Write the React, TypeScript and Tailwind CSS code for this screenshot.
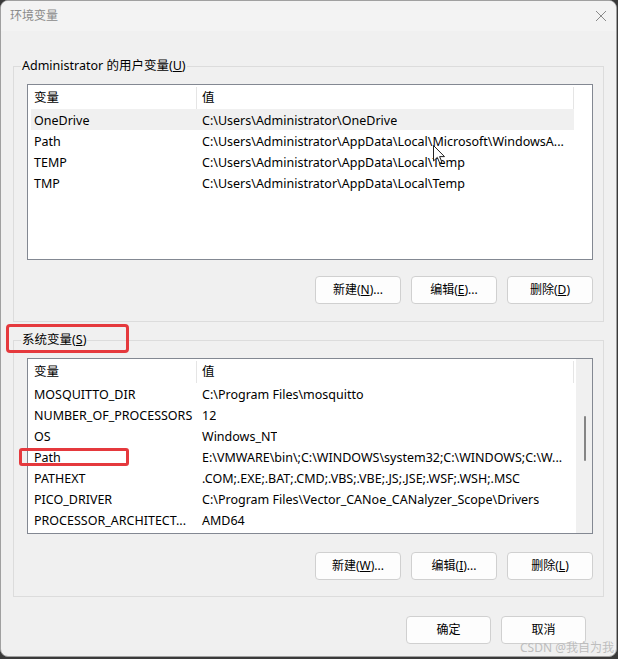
import React from "react";

type Row = { name: string; value: string; selected?: boolean };

const userRows: Row[] = [
  { name: "OneDrive", value: "C:\\Users\\Administrator\\OneDrive", selected: true },
  { name: "Path", value: "C:\\Users\\Administrator\\AppData\\Local\\Microsoft\\WindowsA..." },
  { name: "TEMP", value: "C:\\Users\\Administrator\\AppData\\Local\\Temp" },
  { name: "TMP", value: "C:\\Users\\Administrator\\AppData\\Local\\Temp" },
];

const systemRows: Row[] = [
  { name: "MOSQUITTO_DIR", value: "C:\\Program Files\\mosquitto" },
  { name: "NUMBER_OF_PROCESSORS", value: "12" },
  { name: "OS", value: "Windows_NT" },
  { name: "Path", value: "E:\\VMWARE\\bin\\;C:\\WINDOWS\\system32;C:\\WINDOWS;C:\\W..." },
  { name: "PATHEXT", value: ".COM;.EXE;.BAT;.CMD;.VBS;.VBE;.JS;.JSE;.WSF;.WSH;.MSC" },
  { name: "PICO_DRIVER", value: "C:\\Program Files\\Vector_CANoe_CANalyzer_Scope\\Drivers" },
  { name: "PROCESSOR_ARCHITECT...", value: "AMD64" },
];

const Btn = ({ children, w = "w-[86px]" }: { children: React.ReactNode; w?: string }) => (
  <button
    className={`${w} h-[28px] bg-[#fdfdfd] border border-[#d0d0d0] rounded-[4px] flex items-center justify-center text-[12px] text-black`}
  >
    {children}
  </button>
);

const VarList = ({ rows, scroll }: { rows: Row[]; scroll?: boolean }) => (
  <div className="w-[566px] h-[176px] border border-[#838892] bg-white flex overflow-hidden">
    <div className="w-[547px] flex flex-col">
      <div className="h-[24px] pt-[2px] flex shrink-0">
        <div className="w-[169px] pl-[6px] flex items-center border-r border-[#e5e5e5]">变量</div>
        <div className="w-[377px] pl-[5px] flex items-center border-r border-[#e5e5e5]">值</div>
      </div>
      {rows.map((r) => (
        <div
          key={r.name}
          className={`h-[21px] pt-[2px] shrink-0 ml-[3px] w-[543px] flex items-center whitespace-nowrap ${
            r.selected ? "bg-[#f0f0f0]" : ""
          }`}
        >
          <div className="w-[165px] pl-[3px] overflow-hidden">{r.name}</div>
          <div className="pl-[6px] overflow-hidden">{r.value}</div>
        </div>
      ))}
    </div>
    {scroll ? (
      <div className="ml-[1px] flex-1 bg-[#f0f0f0] relative">
        <div className="absolute left-[8px] top-[57px] w-[2px] h-[45px] rounded-full bg-[#858585]" />
      </div>
    ) : null}
  </div>
);

const Group = ({
  label,
  rows,
  scroll,
  buttons,
  lower,
}: {
  label: React.ReactNode;
  rows: Row[];
  scroll?: boolean;
  buttons: React.ReactNode[];
  lower?: boolean;
}) => (
  <fieldset
    className={`border border-[#dcdcdc] pl-[13px] pt-[10px] flex flex-col ${lower ? "pb-[16px]" : "pb-[17px]"}`}
  >
    <legend className="-ml-[6px] px-[1px] leading-[16px]">{label}</legend>
    <VarList rows={rows} scroll={scroll} />
    <div className={`w-[566px] flex justify-end gap-[10px] ${lower ? "mt-[18px]" : "mt-[16px]"}`}>
      {buttons.map((b, i) => (
        <Btn key={i}>{b}</Btn>
      ))}
    </div>
  </fieldset>
);

export default function App() {
  return (
    <div className="relative w-[618px] h-[659px] bg-[#3a3a3a] font-['Noto_Sans','Noto_Sans_CJK_SC',sans-serif] text-[12.5px] leading-[16px] text-black">
      <div className="w-[617px] h-[657px] bg-[#f0f0f0] border border-[#a0a0a0] rounded-[8px] overflow-hidden flex flex-col">
        <div className="h-[30px] shrink-0 bg-[#f3f3f3] flex items-center justify-between pl-[9px] pr-[9px]">
          <span className="text-[12px] text-[#8a8a8a]">环境变量</span>
          <svg width="12" height="12" viewBox="0 0 12 12">
            <path d="M1 1L11 11M11 1L1 11" stroke="#8a8a8a" strokeWidth="1" />
          </svg>
        </div>

        <div className="px-[12px] pt-[27px] flex flex-col">
          <Group
            label={
              <>
                Administrator 的用户变量(<span className="underline">U</span>)
              </>
            }
            rows={userRows}
            buttons={[
              <>新建(<span className="underline">N</span>)...</>,
              <>编辑(<span className="underline">E</span>)...</>,
              <>删除(<span className="underline">D</span>)</>,
            ]}
          />
          <div className="h-[10px]" />
          <Group
            label={
              <>
                系统变量(<span className="underline">S</span>)
              </>
            }
            rows={systemRows}
            scroll
            lower
            buttons={[
              <>新建(<span className="underline">W</span>)...</>,
              <>编辑(<span className="underline">I</span>)...</>,
              <>删除(<span className="underline">L</span>)</>,
            ]}
          />
          <div className="mt-[19px] pr-[18px] flex justify-end gap-[10px]">
            <Btn w="w-[85px]">确定</Btn>
            <Btn w="w-[85px]">取消</Btn>
          </div>
        </div>
      </div>

      {/* annotations */}
      <div className="absolute left-[6px] top-[324px] w-[123px] h-[29px] border-[3px] border-[#e5393d] rounded-[4px]" />
      <div className="absolute left-[19px] top-[448px] w-[110px] h-[18px] border-[3px] border-[#e5393d] rounded-[3px]" />

      {/* mouse pointer */}
      <svg className="absolute left-[433px] top-[145px]" width="13" height="20" viewBox="0 0 13 20">
        <path d="M0.5 0.5V16L4.3 12.4L6.8 18.3L9 17.3L6.6 11.6H11.5Z" fill="white" stroke="#222" strokeWidth="1" />
      </svg>

      <div className="absolute right-[4px] top-[640px] text-[12px] text-[#bdbdbd]">CSDN @我自为我</div>
    </div>
  );
}
